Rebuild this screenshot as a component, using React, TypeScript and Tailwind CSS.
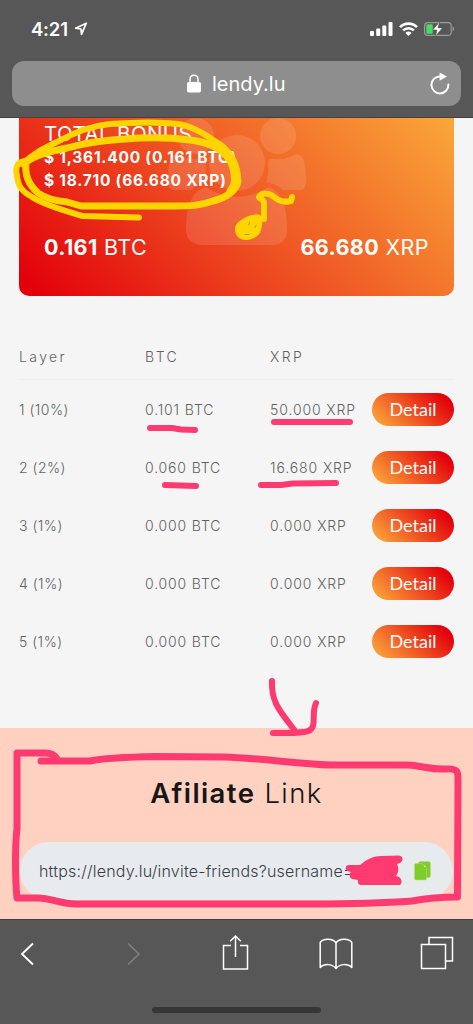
interface LayerRow {
  layer: string
  btc: string
  xrp: string
}

const ROWS: LayerRow[] = [
  { layer: '1 (10%)', btc: '0.101 BTC', xrp: '50.000 XRP' },
  { layer: '2 (2%)', btc: '0.060 BTC', xrp: '16.680 XRP' },
  { layer: '3 (1%)', btc: '0.000 BTC', xrp: '0.000 XRP' },
  { layer: '4 (1%)', btc: '0.000 BTC', xrp: '0.000 XRP' },
  { layer: '5 (1%)', btc: '0.000 BTC', xrp: '0.000 XRP' },
]

function StatusBar() {
  return (
    <div className="flex h-[61px] items-start justify-between pr-[18px] pl-[31px] pt-[18px] text-white">
      <div className="flex items-center gap-[6px]">
        <span className="text-[18.5px] leading-[22px] font-semibold tracking-[-0.2px]">4:21</span>
        <svg width="14" height="14" viewBox="0 0 14 14" fill="none" stroke="currentColor" strokeWidth="1.7" strokeLinejoin="round">
          <path d="M12.3 1.2 L1.6 6.2 L7 7 L7.5 12.4 Z" />
        </svg>
      </div>
      <div className="flex items-center gap-[6px] pt-[4px]">
        <svg width="23" height="14" viewBox="0 0 23 14" fill="currentColor">
          <rect x="0" y="9" width="4" height="5" rx="1" />
          <rect x="6.2" y="6.5" width="4" height="7.5" rx="1" />
          <rect x="12.3" y="3.5" width="4" height="10.5" rx="1" />
          <rect x="18.5" y="0" width="4" height="14" rx="1" />
        </svg>
        <svg width="19" height="14" viewBox="0 0 19 14" fill="none" stroke="currentColor" strokeWidth="2.6">
          <path d="M1 5.2 A12 12 0 0 1 18 5.2" />
          <path d="M4.1 8.4 A7.7 7.7 0 0 1 14.9 8.4" />
          <path d="M9.5 14 L6.4 10.9 A4.4 4.4 0 0 1 12.6 10.9 Z" fill="currentColor" stroke="none" />
        </svg>
        <svg width="31" height="14" viewBox="0 0 31 14" fill="none">
          <rect x="0.6" y="0.6" width="26.6" height="12.8" rx="3.2" stroke="#9b9b9b" strokeWidth="1.2" />
          <rect x="2.3" y="2.2" width="6.5" height="9.6" rx="1.2" fill="#4cd964" />
          <path d="M28.6 4.6 C30.6 5.4 30.6 8.6 28.6 9.4 Z" fill="#9b9b9b" />
          <path d="M15.4 0 L8.7 7.9 H13 L11.6 14 L18.3 5.9 H14 Z" fill="#fff" stroke="#575757" strokeWidth="0.5" />
        </svg>
      </div>
    </div>
  )
}

function AddressBar() {
  return (
    <div className="mx-3 flex h-[45px] items-center rounded-xl bg-[#8e8e8e] pr-[10px] text-white">
      <div className="flex flex-1 items-center gap-[11px] pl-[175px]">
        <svg width="14" height="19" viewBox="0 0 14 19">
          <rect x="0" y="8" width="14" height="10.5" rx="1.8" fill="currentColor" />
          <path d="M3 9 V5.2 A4 4 0 0 1 11 5.2 V9" fill="none" stroke="currentColor" strokeWidth="1.5" />
        </svg>
        <span className="text-[20px] leading-6">lendy.lu</span>
      </div>
      <svg width="22" height="23" viewBox="0 0 22 23" fill="none">
        <path d="M11.2 4.4 A8.5 8.5 0 1 0 19.4 12.6" stroke="currentColor" strokeWidth="2" strokeLinecap="round" />
        <path d="M10.6 0.4 L18 4.6 L10.6 8.8 Z" fill="currentColor" />
      </svg>
    </div>
  )
}

function BonusCard() {
  return (
    <section className="relative mx-[19px] h-[178px] overflow-hidden rounded-b-[10px] bg-[linear-gradient(45deg,#e3000b_3%,#ee4f22_47%,#faa739_100%)] px-[25px] text-white">
      {/* faded group mark behind the numbers */}
      <svg className="absolute top-0 left-[149px]" width="140" height="130" viewBox="0 0 140 130" fill="#fff" fillOpacity="0.12">
        <circle cx="28" cy="18" r="18" />
        <circle cx="110" cy="18" r="18" />
        <circle cx="69" cy="45" r="28" />
        <path d="M10 36 C16 40 23 42 30 41 C36 40 38 41 38 45 C37 52 38 58 40 64 C36 65 28 67 23 72 H8 C2 73 0 69 0 62 C0 50 1 36 10 36 Z" />
        <path d="M128 36 C122 40 115 42 108 41 C102 40 100 41 100 45 C101 52 100 58 98 64 C102 65 110 67 115 72 H130 C136 73 138 69 138 62 C138 50 137 36 128 36 Z" />
        <path d="M38 69 C57 82 81 82 100 69 C114 73 119 88 119 112 C119 122 113 127 104 127 H34 C25 127 18 122 18 112 C18 88 24 73 38 69 Z" />
      </svg>
      <h2 className="relative pt-[3px] text-[20.5px] leading-[25px] tracking-[0.4px]">TOTAL BONUS</h2>
      <p className="relative text-[15.5px] leading-[23px] font-bold tracking-[0.75px] whitespace-nowrap">$ 1,361.400 (0.161 BTC)</p>
      <p className="relative text-[15.5px] leading-[23px] font-bold tracking-[0.75px] whitespace-nowrap">$ 18.710 (66.680 XRP)</p>
      <div className="relative mt-[41px] flex justify-between text-[21.5px] leading-[28px] tracking-[0.4px]">
        <span><b>0.161</b> BTC</span>
        <span><b>66.680</b> XRP</span>
      </div>
    </section>
  )
}

function LayerTable() {
  return (
    <section className="mx-[19px] mt-[38px] text-[14px] text-[#626262]">
      <div className="grid h-[46px] grid-cols-[126px_125px_1fr] items-center border-b border-[#eee] font-light tracking-[2.4px]">
        <span>Layer</span>
        <span>BTC</span>
        <span>XRP</span>
      </div>
      {ROWS.map((row) => (
        <div key={row.layer} className="grid h-[58px] grid-cols-[126px_125px_102px_82px] items-center font-light whitespace-nowrap">
          <span className="tracking-[0.5px]">{row.layer}</span>
          <span className="tracking-[0.85px]">{row.btc}</span>
          <span className="tracking-[0.9px]">{row.xrp}</span>
          <button className="h-[33px] rounded-full bg-[linear-gradient(45deg,#fba63a_5%,#e3000b_88%)] font-['Lato'] text-[18px] leading-[33px] font-normal text-white">
            Detail
          </button>
        </div>
      ))}
    </section>
  )
}

function AffiliateLink() {
  return (
    <section className="mt-auto h-[191px] bg-[#ffd1c0] px-5 pt-[46px]">
      <h3 className="text-center text-[27.5px] leading-[38px] font-light tracking-[1.4px] text-[#161616]">
        <span className="font-semibold">Afiliate</span> Link
      </h3>
      <div className="mt-[30px] flex h-[58px] items-center rounded-full bg-[#e8ebee] pr-[22px] pl-[19px] text-[#383d48]">
        <span className="flex-1 text-[16px] font-light tracking-[0.2px] whitespace-nowrap">https://lendy.lu/invite-friends?username=</span>
        <svg width="17" height="20" viewBox="0 0 17 20">
          <rect x="4.5" y="0.5" width="12" height="16" rx="1.5" fill="#80cc28" />
          <path d="M1.5 2.5 H8 L12.5 7 V17.5 A1.5 1.5 0 0 1 11 19 H2 A1.5 1.5 0 0 1 0.5 17.5 V3.5 Z" fill="#80cc28" stroke="#b5e07e" strokeWidth="0.5" />
          <path d="M10.2 4 V6 H12.2 Z" fill="#e8ebee" />
        </svg>
      </div>
    </section>
  )
}

function Toolbar() {
  return (
    <nav className="h-[105px] border-t border-[#424048] bg-[#575757] text-white">
      <div className="flex h-[68px] items-center pl-[20px]">
        <svg className="mr-[91px]" width="15" height="24" viewBox="0 0 15 24" fill="none" stroke="currentColor" strokeWidth="1.9">
          <path d="M13 1.5 L2 12 L13 22.5" />
        </svg>
        <svg className="mr-[81px]" width="15" height="24" viewBox="0 0 15 24" fill="none" stroke="#828282" strokeWidth="1.5">
          <path d="M2 1.5 L13 12 L2 22.5" />
        </svg>
        <svg className="mr-[70px] mb-[4px]" width="27" height="36" viewBox="0 0 27 36" fill="none" stroke="currentColor" strokeWidth="1.5">
          <path d="M9 11.5 H1.5 V35 H25.5 V11.5 H18" />
          <path d="M13.5 23 V2 M8.2 7.3 L13.5 2 L18.8 7.3" />
        </svg>
        <svg className="mr-[67px]" width="34" height="32" viewBox="0 0 34 32" fill="none" stroke="currentColor" strokeWidth="1.5" strokeLinejoin="round">
          <path d="M17 30.5 C13 25.5 5 25.5 1.2 29.5 V4.5 C4 0.2 14 0.2 17 5 C20 0.2 30 0.2 32.8 4.5 V29.5 C29 25.5 21 25.5 17 30.5 Z M17 5 V30" />
        </svg>
        <svg className="mb-[2px]" width="34" height="34" viewBox="0 0 34 34" fill="none" stroke="currentColor" strokeWidth="1.5">
          <path d="M9 8.5 V1.5 H32.5 V25 H26" />
          <rect x="1.5" y="8.5" width="24" height="24" />
        </svg>
      </div>
      <div className="mx-auto mt-[19px] h-[6px] w-[169px] rounded-full bg-[#363636]" />
    </nav>
  )
}

// Hand-drawn marker strokes that lie on top of the page
function MarkerStrokes() {
  return (
    <svg className="pointer-events-none absolute inset-0" width="473" height="1024" viewBox="0 0 473 1024" fill="none" strokeLinecap="round" strokeLinejoin="round">
      <g stroke="#ffd500">
        <path strokeWidth="6" d="M25 161 C17 162 15 167 17 176 C18 187 23 192 32 197 C46 206 66 211 83 216 L139 217.5" />
        <path
          strokeWidth="6"
          d="M22 164 C35 153 42 149 57 142 C73 133 90 126 110 124 C137 122 162 122 178 124 C194 126 209 137 216 142 C229 151 238 166 238 181"
        />
        <path
          strokeWidth="7"
          d="M238 181 C237 191 225 198 213 201 C199 206 190 206 175 206 H81 L67 202 C55 201 45 198 38 193 C27 183 25 174 26 162 C34 156 51 151 67 148 C85 143 105 140 125 139 C150 137 174 138 190 140 C209 142 222 149 230 160 C238 170 236 184 230 191"
        />
        <path strokeWidth="10" d="M212 142 C226 149 236 162 236 180" />
        <path strokeWidth="6" d="M264 219 V203 C264 199 260 200 259 197 C262 192 270 193 274 197 C280 202 287 202 291 201 L292 197" />
      </g>
      <path d="M236 225 C240 219 252 213 260 215 C264 219 262 228 260 233 C254 241 242 242 238 237 C235 234 234 229 236 225 Z" fill="#ffd500" />
      <path d="M248.5 225 L249.5 222.5 M255 227.5 L256 225.5 M245 234.5 L249 234.5" stroke="#a18a16" strokeWidth="0.8" />

      <g stroke="#fe3b71" strokeWidth="6">
        <path d="M150 428 L172 428 L181 429.5 L195 430" />
        <path d="M165 485 L196 486" />
        <path d="M274 422 H350" />
        <path d="M261 485 L281 485 L293 483.5 L336 483" />
        <path d="M272 681 C271 704 282 713 295 731" />
        <path d="M273 733 H294 C306 732 311 732 313 726 C315 719 312 712 316 703" />
        <path
          strokeWidth="7"
          d="M41 761 H90 C104 758 130 757 155 756.5 L224 757 C260 758 298 764 330 765 H408 C424 766 431 770 446 769 C459 768 458 773 458 781 L457.5 897 C445 897 428 898 412 901 C385 903 348 904 312 904 L190 904 H76 C61 904 51 898 38 898 L17 898 C15 878 15 845 17 829 V753 H45 C52 753 55 755 57 759"
        />
      </g>
      <path
        d="M348 865 L360 865 C367 859 374 856 381 856 L399 855.5 C403 856 404 861 400 863 L397 864 C399 868 399 872 396 876 C402 877 403 883 400 885 H361 C357 885 358 880 358 880 L352 879 C348 877 350 872 351 872 C345 871 344 867 348 865 Z"
        fill="#fe3b71"
      />
    </svg>
  )
}

export default function App() {
  return (
    <div className="relative flex h-[1024px] w-[473px] flex-col overflow-hidden bg-[#f5f5f5] font-['Inter','Liberation_Sans',sans-serif]">
      <header className="h-[118px] shrink-0 border-b border-[#424242] bg-[#575757]">
        <StatusBar />
        <AddressBar />
      </header>
      <main className="flex flex-1 flex-col">
        <BonusCard />
        <LayerTable />
        <AffiliateLink />
      </main>
      <Toolbar />
      <MarkerStrokes />
    </div>
  )
}
